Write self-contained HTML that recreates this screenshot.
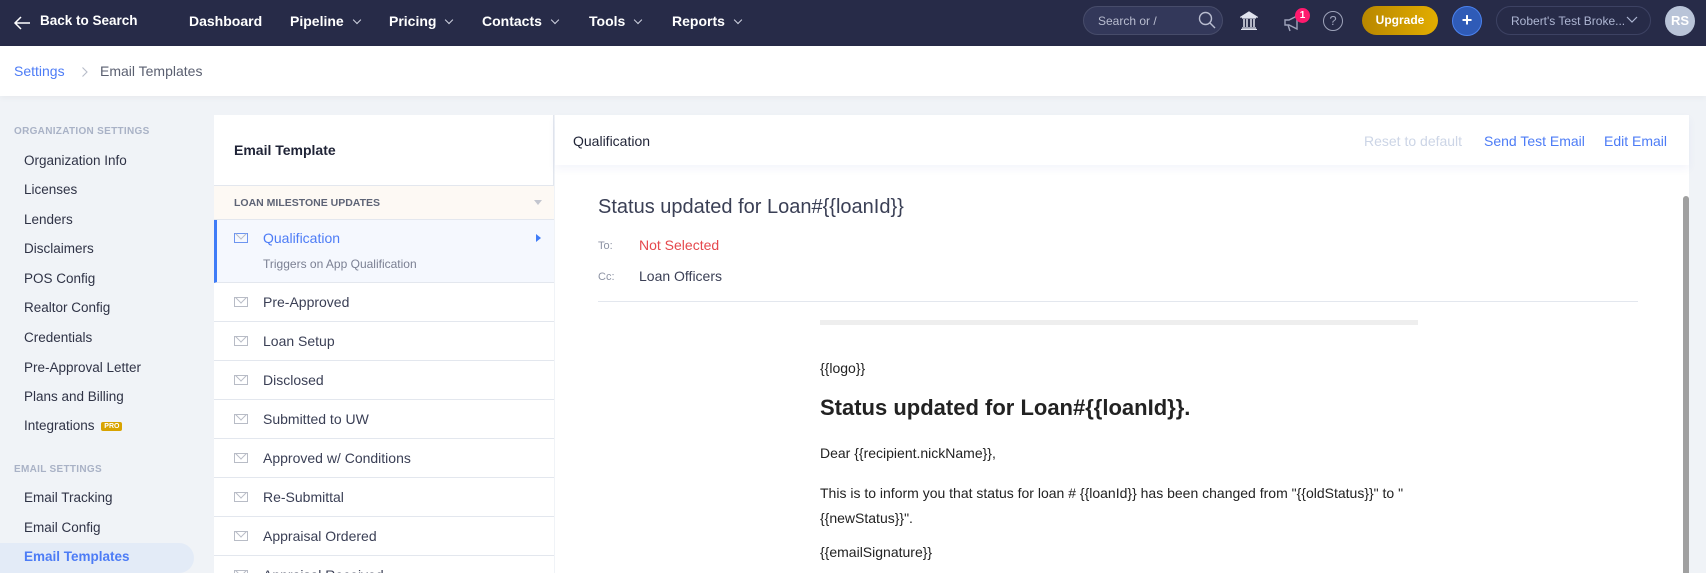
<!DOCTYPE html>
<html><head><meta charset="utf-8"><style>
*{margin:0;padding:0;box-sizing:border-box}
html,body{width:1706px;height:573px;overflow:hidden}
body{background:#f0f3f7;font-family:"Liberation Sans",sans-serif;position:relative;color:#2a2f45}
.a{position:absolute;white-space:nowrap}
.nav{left:0;top:0;width:1706px;height:46px;background:#272b48}
.nl{color:#fff;font-weight:bold;font-size:14px;top:13px}
.chev{display:inline-block;width:6px;height:6px;border-right:1.2px solid #cfd3e0;border-bottom:1.2px solid #cfd3e0;transform:rotate(45deg);margin-left:10px;position:relative;top:-3px}
.side{font-size:13.5px;color:#2f3346;left:24px}
.lab{font-size:10px;font-weight:bold;color:#a9b2c6;left:14px;letter-spacing:.3px}
.row{left:214px;width:340px;height:39px;border-bottom:1px solid #e3e7ee;background:#fff}
.row span{position:absolute;left:49px;top:11px;font-size:14px;color:#3a3f55}
.env{position:absolute;left:20px;top:14px;width:14px;height:10px;border:1px solid #b8bcc6}
.env:after{content:"";position:absolute;left:2px;top:-4px;width:7px;height:7px;border-right:1px solid #b8bcc6;border-bottom:1px solid #b8bcc6;transform:rotate(45deg)}
.body{font-family:"Liberation Sans",Arial,sans-serif;font-size:14px;color:#222;left:820px}
</style></head><body>
<div class="a nav"></div>
<svg class="a" style="left:12px;top:13px" width="20" height="20" viewBox="0 0 20 20"><path d="M18 10H3M9 4L3 10l6 6" stroke="#fff" stroke-width="1.5" fill="none"/></svg>
<div class="a nl" style="left:40px;font-size:13.5px">Back to Search</div>
<div class="a nl" style="left:189px">Dashboard</div>
<div class="a nl" style="left:290px">Pipeline<i class="chev"></i></div>
<div class="a nl" style="left:389px">Pricing<i class="chev"></i></div>
<div class="a nl" style="left:482px">Contacts<i class="chev"></i></div>
<div class="a nl" style="left:589px">Tools<i class="chev"></i></div>
<div class="a nl" style="left:672px">Reports<i class="chev"></i></div>
<div class="a" style="left:1083px;top:6px;width:140px;height:29px;border:1px solid #474c6a;border-radius:15px;background:#33385a"></div>
<div class="a" style="left:1098px;top:14px;color:#b9bdd0;font-size:12px">Search or /</div>
<svg class="a" style="left:1198px;top:11px" width="18" height="18"><circle cx="7.5" cy="7.5" r="6" stroke="#b9bdd0" stroke-width="1.4" fill="none"/><path d="M12 12l5 5" stroke="#b9bdd0" stroke-width="1.4"/></svg>
<svg class="a" style="left:1240px;top:11px" width="18" height="19"><path d="M1 6L9 1l8 5zM2 7h14M2 17h14M1 18.5h16" stroke="#e0e3ee" stroke-width="1.3" fill="#e0e3ee"/><path d="M4 8v8M14 8v8M7 8v8M11 8v8" stroke="#e0e3ee" stroke-width="1.5"/></svg>
<svg class="a" style="left:1283px;top:14px" width="22" height="18"><path d="M2 6h4l8-4v13l-8-4H2zM5 11l2 6" stroke="#9ea3ba" stroke-width="1.4" fill="none"/></svg>
<div class="a" style="left:1295px;top:8px;width:15px;height:15px;border-radius:50%;background:#ff1a6e;color:#fff;font-size:10px;font-weight:bold;text-align:center;line-height:15px">1</div>
<div class="a" style="left:1323px;top:11px;width:20px;height:20px;border:1.4px solid #9ea3ba;border-radius:50%;color:#9ea3ba;font-size:13px;text-align:center;line-height:18px">?</div>
<div class="a" style="left:1362px;top:6px;width:76px;height:29px;border-radius:15px;background:linear-gradient(90deg,#b88700,#e2ad00);color:#fff;font-weight:bold;font-size:12px;text-align:center;line-height:29px">Upgrade</div>
<div class="a" style="left:1452px;top:6px;width:30px;height:30px;border-radius:50%;background:#2f5bb7;border:1px solid #4b82ee;color:#fff;font-size:18px;font-weight:bold;text-align:center;line-height:27px">+</div>
<div class="a" style="left:1496px;top:6px;width:155px;height:29px;border:1px solid #3d4263;border-radius:15px"></div>
<div class="a" style="left:1511px;top:14px;font-size:12px;color:#aeb6d3">Robert's Test Broke...</div>
<svg class="a" style="left:1626px;top:16px" width="12" height="8"><path d="M1 1l5 5 5-5" stroke="#aeb6d3" stroke-width="1.2" fill="none"/></svg>
<div class="a" style="left:1665px;top:6px;width:30px;height:30px;border-radius:50%;background:#b9c4d8;color:#fff;font-weight:bold;font-size:13px;text-align:center;line-height:30px">RS</div>

<div class="a" style="left:0;top:46px;width:1706px;height:50px;background:#fff;box-shadow:0 2px 6px rgba(0,0,0,.04)"></div>
<div class="a" style="left:14px;top:63px;font-size:14px;color:#4d7cf6">Settings</div>
<svg class="a" style="left:81px;top:66px" width="8" height="12"><path d="M1.5 1.5l4.5 4.5-4.5 4.5" stroke="#b7bcc9" stroke-width="1.1" fill="none"/></svg>
<div class="a" style="left:100px;top:63px;font-size:14px;color:#5a5f70">Email Templates</div>

<div class="a lab" style="top:126px">ORGANIZATION SETTINGS</div>
<div class="a side" style="top:153px">Organization Info</div>
<div class="a side" style="top:182px">Licenses</div>
<div class="a side" style="top:212px">Lenders</div>
<div class="a side" style="top:241px">Disclaimers</div>
<div class="a side" style="top:271px">POS Config</div>
<div class="a side" style="top:300px">Realtor Config</div>
<div class="a side" style="top:330px">Credentials</div>
<div class="a side" style="top:360px">Pre-Approval Letter</div>
<div class="a side" style="top:389px">Plans and Billing</div>
<div class="a side" style="top:418px">Integrations <span style="display:inline-block;background:#d8a300;color:#fff;font-size:7px;font-weight:bold;padding:1px 3px;border-radius:2px;vertical-align:2px;margin-left:3px">PRO</span></div>
<div class="a lab" style="top:464px">EMAIL SETTINGS</div>
<div class="a side" style="top:490px">Email Tracking</div>
<div class="a side" style="top:520px">Email Config</div>
<div class="a" style="left:0;top:543px;width:194px;height:30px;background:#e3ebf7;border-radius:0 15px 15px 0"></div>
<div class="a side" style="top:549px;color:#4d7cf6;font-weight:bold">Email Templates</div>

<div class="a" style="left:214px;top:115px;width:340px;height:458px;background:#fff;border-right:1px solid #e3e7ee"></div>
<div class="a" style="left:234px;top:142px;font-size:14px;font-weight:bold;color:#1f2336">Email Template</div>
<div class="a" style="left:214px;top:185px;width:340px;height:35px;background:#fdf9f4;border-top:1px solid #e3e7ee;border-bottom:1px solid #e3e7ee"></div>
<div class="a" style="left:234px;top:197px;font-size:10.5px;font-weight:bold;color:#5e6476">LOAN MILESTONE UPDATES</div>
<div class="a" style="left:534px;top:200px;border:4px solid transparent;border-top:5px solid #c3c6cf"></div>
<div class="a" style="left:214px;top:220px;width:340px;height:63px;background:#f5f8fe;border-left:3px solid #3f7cf7;border-bottom:1px solid #e3e7ee"><i class="env" style="left:17px;top:13px;border-color:#6d95f0"></i><span class="a" style="left:46px;top:10px;font-size:14px;color:#4d7cf6">Qualification</span><span class="a" style="left:46px;top:37px;font-size:12px;color:#7b8093">Triggers on App Qualification</span></div>
<div class="a" style="left:536px;top:234px;border:4px solid transparent;border-left:5px solid #3f7cf7"></div>
<div class="a row" style="top:283px"><i class="env"></i><span>Pre-Approved</span></div>
<div class="a row" style="top:322px"><i class="env"></i><span>Loan Setup</span></div>
<div class="a row" style="top:361px"><i class="env"></i><span>Disclosed</span></div>
<div class="a row" style="top:400px"><i class="env"></i><span>Submitted to UW</span></div>
<div class="a row" style="top:439px"><i class="env"></i><span>Approved w/ Conditions</span></div>
<div class="a row" style="top:478px"><i class="env"></i><span>Re-Submittal</span></div>
<div class="a row" style="top:517px"><i class="env"></i><span>Appraisal Ordered</span></div>
<div class="a row" style="top:556px"><i class="env"></i><span>Appraisal Received</span></div>

<div class="a" style="left:555px;top:115px;width:1134px;height:458px;background:#fff"></div>
<div class="a" style="left:555px;top:115px;width:1134px;height:50px;background:#fff;box-shadow:0 4px 8px rgba(60,90,180,.06)"></div>
<div class="a" style="left:573px;top:133px;font-size:14px;color:#1f2336">Qualification</div>
<div class="a" style="left:1364px;top:133px;font-size:14px;color:#ccd5e6">Reset to default</div>
<div class="a" style="left:1484px;top:133px;font-size:14px;color:#4d7cf6">Send Test Email</div>
<div class="a" style="left:1604px;top:133px;font-size:14px;color:#4d7cf6">Edit Email</div>
<div class="a" style="left:1683px;top:196px;width:6px;height:377px;background:#a0a0a0;border-radius:3px 3px 0 0"></div>
<div class="a" style="left:598px;top:196px;font-size:20px;color:#3a3f55">Status updated for Loan#{{loanId}}</div>
<div class="a" style="left:598px;top:240px;font-size:11px;color:#8c92a3">To:</div>
<div class="a" style="left:639px;top:237px;font-size:14px;color:#e5484d">Not Selected</div>
<div class="a" style="left:598px;top:271px;font-size:11px;color:#8c92a3">Cc:</div>
<div class="a" style="left:639px;top:268px;font-size:14px;color:#3a3f55">Loan Officers</div>
<div class="a" style="left:598px;top:301px;width:1040px;height:1px;background:#e3e7ee"></div>
<div class="a" style="left:820px;top:320px;width:598px;height:5px;background:#eeeeee"></div>
<div class="a body" style="top:360px">{{logo}}</div>
<div class="a body" style="top:395px;font-size:22px;font-weight:bold">Status updated for Loan#{{loanId}}.</div>
<div class="a body" style="top:445px">Dear {{recipient.nickName}},</div>
<div class="a body" style="top:485px">This is to inform you that status for loan # {{loanId}} has been changed from "{{oldStatus}}" to "</div>
<div class="a body" style="top:510px">{{newStatus}}".</div>
<div class="a body" style="top:544px">{{emailSignature}}</div>
</body></html>
